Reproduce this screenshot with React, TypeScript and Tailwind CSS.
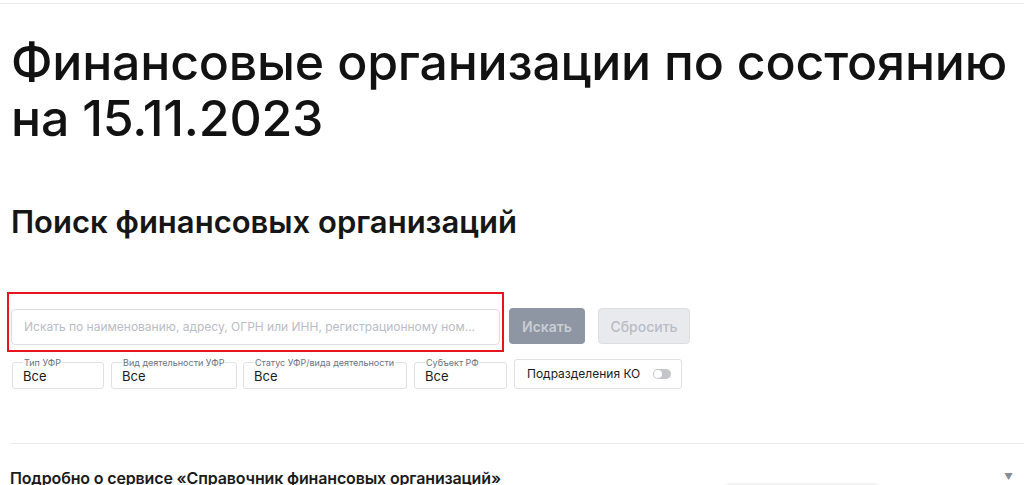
import React from "react";

function Filter({ label, className }: { label: string; className: string }) {
  return (
    <fieldset
      className={`${className} h-[31px] shrink-0 rounded-[3px] border border-[#dfe1e5] px-[10px] pb-[4px]`}
    >
      <legend className="px-[1px] text-[9px] leading-[9px] text-[#6b7280]">
        {label}
      </legend>
      <div className="mt-[1px] text-[13px] leading-[17px] text-[#1a1a1a]">Все</div>
    </fieldset>
  );
}

export default function App() {
  return (
    <div className="min-h-[485px] overflow-hidden bg-white font-['Inter',sans-serif] text-[#111]">
      <div className="mt-[3px] h-[1px] bg-[#ececec]" />
      <div className="px-[11px]">
        <h1 className="mt-[30px] text-[50px] font-medium leading-[56px] tracking-[-0.2px] text-[#121212]">
          Финансовые организации по состоянию
          <br />
          на 15.11.2023
        </h1>
        <h2 className="mt-[58px] text-[31px] font-semibold leading-[36px] text-[#161616]">
          Поиск финансовых организаций
        </h2>
        <div className="mt-[52px] flex items-end">
          <div className="ml-[-4px] h-[60px] w-[497px] border-2 border-[#e8141b] px-[2px] pt-[15px]">
            <div className="flex h-[36px] items-center rounded-[4px] border border-[#dcdee2] px-[12px]">
              <span className="truncate text-[12px] text-[#b9bdc6]">
                Искать по наименованию, адресу, ОГРН или ИНН, регистрационному ном...
              </span>
            </div>
          </div>
          <button className="mb-[8px] ml-[5px] h-[36px] w-[76px] rounded-[4px] bg-[#8e96a3] text-[14px] font-semibold text-[#c9cdd4]">
            Искать
          </button>
          <button className="mb-[8px] ml-[13px] h-[36px] w-[92px] rounded-[4px] border border-[#dcdee2] bg-[#e9eaed] text-[14px] font-medium text-[#b8bcc5]">
            Сбросить
          </button>
        </div>
        <div className="mt-[6px] flex">
          <Filter label="Тип УФР" className="ml-[1px] w-[92px]" />
          <Filter label="Вид деятельности УФР" className="ml-[7px] w-[126px]" />
          <Filter label="Статус УФР/вида деятельности" className="ml-[6px] w-[164px]" />
          <Filter label="Субъект РФ" className="ml-[7px] w-[93px]" />
          <div className="ml-[7px] mt-[1px] flex h-[30px] w-[168px] items-center gap-[13px] rounded-[3px] border border-[#dfe1e5] px-[12px]">
            <span className="whitespace-nowrap text-[12px] text-[#1a1a1a]">Подразделения КО</span>
            <span className="flex h-[10px] w-[18px] shrink-0 items-center rounded-full bg-[#c4c6ca] px-[1px]">
              <span className="h-[8px] w-[8px] rounded-full bg-white" />
            </span>
          </div>
        </div>
      </div>
      <div className="ml-[10px] mt-[54px] h-[1px] bg-[#ececee]" />
      <div className="mt-[25px] flex items-start pl-[10px] pr-[11px]">
        <span className="whitespace-nowrap text-[16px] font-semibold leading-[18px] tracking-[-0.15px] text-[#1b1b1b]">
          Подробно о сервисе «Справочник финансовых организаций»
        </span>
        <div className="ml-[222px] mt-[14px] h-[10px] w-[157px] shrink-0 rounded-t-[6px] bg-[#f3f3f4]" />
        <span className="ml-auto mt-[3px] text-[9px] leading-[9px] text-[#8a8d93]">▼</span>
      </div>
    </div>
  );
}
